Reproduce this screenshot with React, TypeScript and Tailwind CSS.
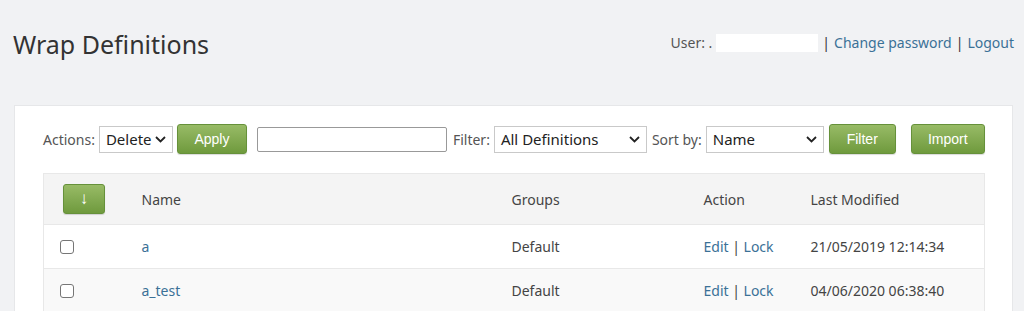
import React from 'react';

const rows = [
  { name: 'a', group: 'Default', modified: '21/05/2019 12:14:34' },
  { name: 'a_test', group: 'Default', modified: '04/06/2020 06:38:40' },
];

function GreenButton({ children, className = '' }: { children: React.ReactNode; className?: string }) {
  return (
    <button
      className={`h-[30px] shrink-0 rounded-[3px] border border-[#66913a] bg-gradient-to-b from-[#98bb66] to-[#6f9a3d] text-[14px] text-white shadow-[0_1px_1px_rgba(0,0,0,0.15)] ${className}`}
      style={{ fontFamily: '"Liberation Sans", Arial, sans-serif' }}
    >
      {children}
    </button>
  );
}

function Select({ value, className = '' }: { value: string; className?: string }) {
  return (
    <div className={`flex h-[27px] shrink-0 items-center justify-between border border-[#c9c9c9] bg-white pl-[6px] pr-[6px] text-[15px] text-[#222] ${className}`}>
      <span className="whitespace-nowrap">{value}</span>
      <svg width="11" height="7" viewBox="0 0 11 7" fill="none">
        <path d="M1 1l4.5 4.5L10 1" stroke="#222" strokeWidth="1.8" />
      </svg>
    </div>
  );
}

export default function App() {
  return (
    <div
      className="h-[311px] w-[1024px] overflow-hidden bg-[#f1f2f4] text-[#333]"
      style={{ fontFamily: '"Noto Sans", "Open Sans", sans-serif' }}
    >
      <div className="flex items-start justify-between pl-[13px] pr-[10px] pt-[26px]">
        <h1 className="text-[25px] leading-[36px] text-[#333]">Wrap Definitions</h1>
        <div className="mt-[6px] flex items-center text-[14px] text-[#555]">
          <span>User: .</span>
          <span className="mx-[4px] h-[18px] w-[102px] bg-white" />
          <span className="text-[#333]">|</span>
          <a className="mx-[4px] text-[#3b7197]">Change password</a>
          <span className="text-[#333]">|</span>
          <a className="ml-[4px] text-[#3b7197]">Logout</a>
        </div>
      </div>

      <div className="ml-[14px] mt-[43px] w-[999px] border border-[#e6e7e9] bg-white pl-[28px] pr-[27px] pt-[18px]">
        <div className="flex items-center whitespace-nowrap text-[14px] text-[#555]">
          <span>Actions:</span>
          <Select value="Delete" className="ml-[4px] w-[74px]" />
          <GreenButton className="ml-[4px] w-[70px]">Apply</GreenButton>
          <input className="ml-[10px] h-[25px] w-[190px] shrink-0 rounded-[2px] border border-[#999] bg-white" />
          <span className="ml-[6px]">Filter:</span>
          <Select value="All Definitions" className="ml-[4px] w-[153px]" />
          <span className="ml-[5px]">Sort by:</span>
          <Select value="Name" className="ml-[4px] w-[118px]" />
          <GreenButton className="ml-[5px] w-[67px]">Filter</GreenButton>
          <GreenButton className="ml-[15px] w-[74px]">Import</GreenButton>
        </div>

        <table className="mt-[19px] w-[942px] border-collapse border border-[#e8e8e8] text-left text-[14px] text-[#444]">
          <colgroup>
            <col className="w-[98px]" />
            <col className="w-[370px]" />
            <col className="w-[192px]" />
            <col className="w-[107px]" />
            <col />
          </colgroup>
          <thead>
            <tr className="h-[51px] bg-[#f4f4f4]">
              <th className="pl-[19px] font-normal">
                <GreenButton className="w-[42px] !text-[17px]">↓</GreenButton>
              </th>
              <th className="font-normal">Name</th>
              <th className="font-normal">Groups</th>
              <th className="font-normal">Action</th>
              <th className="font-normal">Last Modified</th>
            </tr>
          </thead>
          <tbody>
            {rows.map((r, i) => (
              <tr key={r.name} className={`h-[44px] border-t border-[#e8e8e8] ${i % 2 ? 'bg-[#f9f9f9]' : 'bg-white'}`}>
                <td className="pl-[16px]">
                  <span className="block h-[14px] w-[14px] rounded-[3px] border border-[#767676] bg-white" />
                </td>
                <td className="text-[#3b7197]">{r.name}</td>
                <td>{r.group}</td>
                <td>
                  <a className="text-[#3b7197]">Edit</a> | <a className="text-[#3b7197]">Lock</a>
                </td>
                <td>{r.modified}</td>
              </tr>
            ))}
          </tbody>
        </table>
      </div>
    </div>
  );
}
